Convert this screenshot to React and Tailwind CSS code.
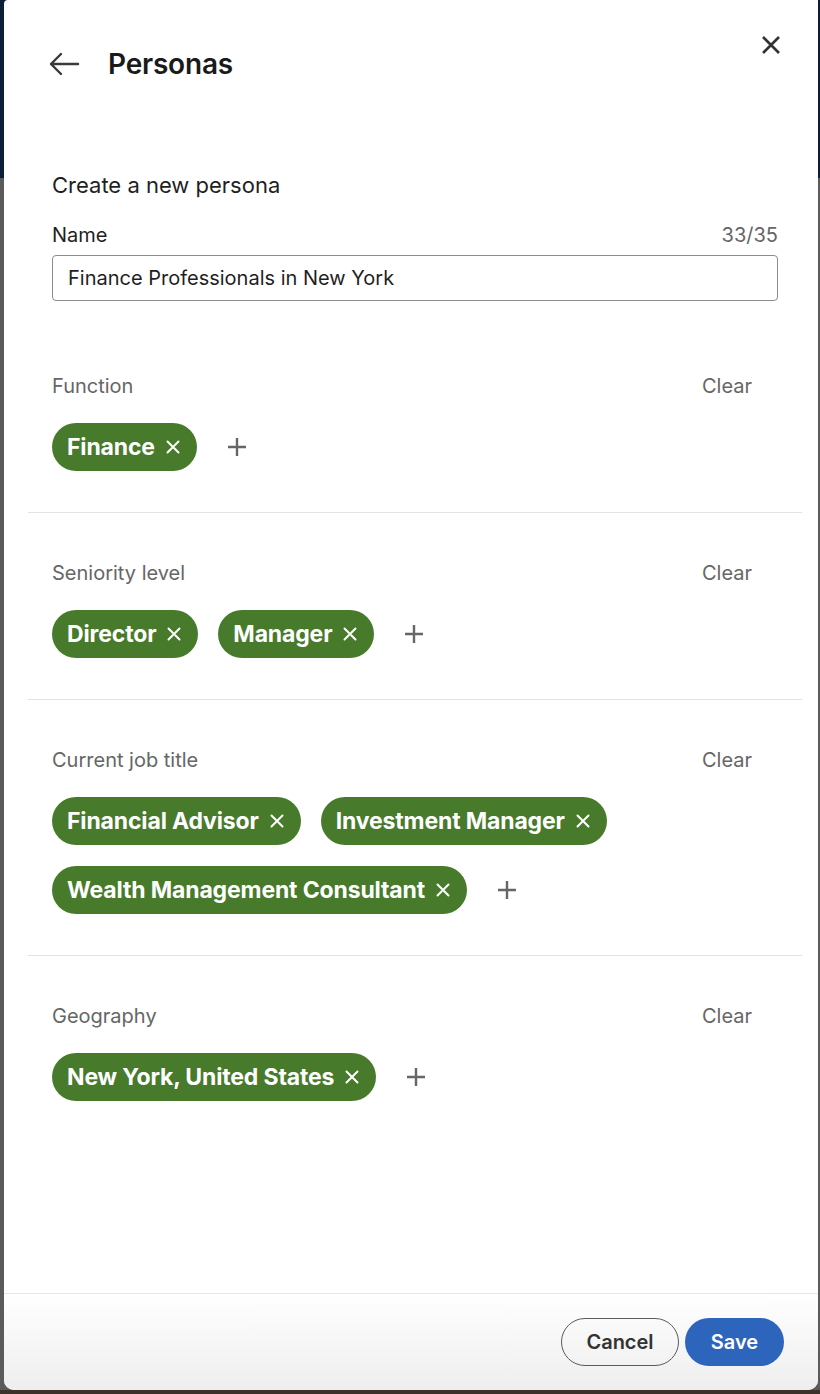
import React from 'react'

// ── Persona data
const SECTIONS = [
  { label: 'Function',          chips: ['Finance'] },
  { label: 'Seniority level',   chips: ['Director', 'Manager'] },
  { label: 'Current job title', chips: ['Financial Advisor', 'Investment Manager', 'Wealth Management Consultant'] },
  { label: 'Geography',         chips: ['New York, United States'] },
]

function Chip({ text }) {
  return (
    <span className="h-[48px] pl-[15px] pr-[16px] rounded-full bg-[#477a2b] text-white flex items-center gap-[10px]">
      <span className="text-[23px] font-bold tracking-[-0.15px] leading-none">{text}</span>
      <svg width="16" height="16" viewBox="0 0 16 16" fill="none" stroke="currentColor" strokeWidth="2" strokeLinecap="round">
        <path d="M2.5 2.5l11 11M13.5 2.5l-11 11" />
      </svg>
    </span>
  )
}

function Section({ label, chips, last }) {
  return (
    <div className={`px-[24px] pt-[48px] pb-[41px] ${last ? '' : 'border-b border-[#e3e3e3]'}`}>
      <div className="flex items-center justify-between h-[24px]">
        <span className="text-[20px] leading-[24px] text-[#666666]">{label}</span>
        <span className="text-[20px] leading-[24px] text-[#666666] pr-[26px]">Clear</span>
      </div>
      <div className="mt-[25px] flex flex-wrap items-center gap-x-[20px] gap-y-[21px]">
        {chips.map(c => <Chip key={c} text={c} />)}
        <span className="w-[40px] h-[48px] flex items-center justify-center text-[#666666]">
          <svg width="20" height="20" viewBox="0 0 20 20" fill="none" stroke="currentColor" strokeWidth="2.4">
            <path d="M10 1v18M1 10h18" />
          </svg>
        </span>
      </div>
    </div>
  )
}

export default function App() {
  return (
    <div className="relative w-[820px] h-[1394px] overflow-hidden font-['Inter',sans-serif]">

      {/* Backdrop behind the modal */}
      <div className="h-full flex flex-col">
        <div className="h-[178px] bg-[#0b1f38]" />
        <div className="flex-1 bg-[#5b5b5b]" />
        <div className="h-[4px] bg-[#3b3229]" />
      </div>

      {/* Modal */}
      <div className="absolute left-[4px] top-0 w-[814px] h-[1390px] bg-white rounded-tl-[4px] rounded-b-[10px] flex flex-col overflow-hidden">

        {/* Header */}
        <div className="relative pt-[44px] pl-[44px] flex items-center h-[84px]">
          <svg width="32" height="24" viewBox="0 0 32 24" fill="none" stroke="#3a3a3a" strokeWidth="2.4" strokeLinecap="round" strokeLinejoin="round">
            <path d="M30 12H3M13 2L3 12l10 10" />
          </svg>
          <h1 className="ml-[28px] text-[28px] font-semibold text-[#1a1a1a] leading-[40px] tracking-[-0.2px]">Personas</h1>
          <button className="absolute right-[29px] top-[27px] w-[36px] h-[36px] flex items-center justify-center text-[#333333]">
            <svg width="18" height="18" viewBox="0 0 18 18" fill="none" stroke="currentColor" strokeWidth="2.6">
              <path d="M1 1l16 16M17 1L1 17" />
            </svg>
          </button>
        </div>

        {/* Scroll body */}
        <div className="flex-1 pl-[24px] pr-[16px] flex flex-col">
          <div className="px-[24px] pt-[87px]">
            <p className="text-[22px] text-[#1f1f1f] leading-[28px]">Create a new persona</p>
            <div className="mt-[24px] flex items-center justify-between h-[24px]">
              <span className="text-[20px] leading-[24px] text-[#1f1f1f]">Name</span>
              <span className="text-[20px] leading-[24px] text-[#666666]">33/35</span>
            </div>
            <div className="mt-[8px] h-[46px] border border-[#8c8c8c] rounded-[4px] px-[15px] flex items-center text-[20px] text-[#1f1f1f]">
              Finance Professionals in New York
            </div>
          </div>
          <div className="pt-[25px]">
            {SECTIONS.map((s, i) => (
              <Section key={s.label} {...s} last={i === SECTIONS.length - 1} />
            ))}
          </div>
        </div>

        {/* Footer */}
        <div className="h-[97px] border-t border-[#e6e6e6] bg-gradient-to-b from-white to-[#eeeeee] flex items-center justify-end gap-[6px] pr-[34px]">
          <button className="h-[48px] w-[118px] rounded-full border border-[#5a5a5a] text-[20px] font-semibold text-[#333333]">Cancel</button>
          <button className="h-[48px] w-[99px] rounded-full bg-[#2d64bc] text-[20px] font-semibold text-white">Save</button>
        </div>
      </div>
    </div>
  )
}
